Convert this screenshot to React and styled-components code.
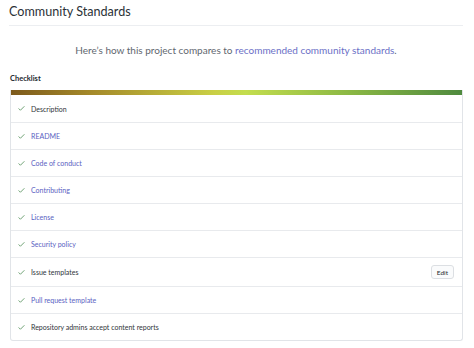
import React from 'react';
import styled, { createGlobalStyle } from 'styled-components';

const GlobalStyle = createGlobalStyle`
  body {
    margin: 0;
    background: #fff;
    font-family: Lato, "Open Sans", sans-serif;
    color: #24292f;
  }
`;

const Page = styled.div`
  width: 474px;
  height: 348px;
  padding: 0 11px 0 9px;
  box-sizing: border-box;
  overflow: hidden;
`;

const Header = styled.h2`
  margin: 0;
  padding: 4px 0 5px;
  font-size: 12.6px;
  font-weight: 400;
  line-height: 16px;
  color: #2b3137;
  border-bottom: 1px solid #eceef1;
`;

const Lead = styled.p`
  margin: 13px 0 0;
  text-align: center;
  font-size: 10px;
  font-weight: 400;
  line-height: 22px;
  color: #5f676f;

  a {
    color: #6b70c6;
    text-decoration: none;
  }
`;

const SectionTitle = styled.h3`
  margin: 12px 0 0;
  padding-left: 1px;
  font-size: 7.5px;
  font-weight: 700;
  line-height: 12px;
  color: #24292f;
`;

const Box = styled.div`
  margin-top: 5px;
  margin-left: 1px;
  border: 1px solid #e1e4e8;
  border-top: 0;
  border-radius: 0 0 3px 3px;
`;

const ProgressBar = styled.div`
  height: 5px;
  background: linear-gradient(
    to right,
    #7d5a1c 0%,
    #a58a2a 18%,
    #c9cf45 45%,
    #c3dd4e 52%,
    #8bb844 75%,
    #4f8a3f 100%
  );
`;

const Row = styled.div`
  display: flex;
  align-items: center;
  gap: 6px;
  height: ${p => (p.$tall ? 29 : 27)}px;
  padding: 0 7px;
  box-sizing: border-box;
  font-size: 7px;
  border-top: ${p => (p.$first ? 0 : '1px solid #e8eaed')};
`;

const Label = styled.span`
  flex: 1;
  color: ${p => (p.$link ? '#5a61c2' : '#2f3439')};
`;

const EditButton = styled.button`
  font-family: inherit;
  font-size: 6.5px;
  color: #24292f;
  background: #fafbfc;
  border: 1px solid #dcdfe3;
  border-radius: 3px;
  padding: 0 5px;
  height: 14px;
  margin-right: 1px;
`;

const Check = () => (
  <svg width="7" height="7" viewBox="0 0 16 16" fill="none">
    <path d="M2 8.5l3.5 3.5L14 3.5" stroke="#4a8a50" strokeWidth="1.8" strokeLinecap="round" strokeLinejoin="round" />
  </svg>
);

const items = [
  { label: 'Description' },
  { label: 'README', link: true },
  { label: 'Code of conduct', link: true },
  { label: 'Contributing', link: true },
  { label: 'License', link: true },
  { label: 'Security policy', link: true },
  { label: 'Issue templates', edit: true },
  { label: 'Pull request template', link: true },
  { label: 'Repository admins accept content reports' }
];

const App = () => (
  <Page>
    <GlobalStyle />
    <Header>Community Standards</Header>
    <Lead>
      Here’s how this project compares to <a href="#">recommended community standards</a>.
    </Lead>
    <SectionTitle>Checklist</SectionTitle>
    <Box>
      <ProgressBar />
      {items.map((item, i) => (
        <Row key={item.label} $first={i === 0} $tall={item.edit}>
          <Check />
          <Label $link={item.link}>{item.label}</Label>
          {item.edit && <EditButton>Edit</EditButton>}
        </Row>
      ))}
    </Box>
  </Page>
);

export default App;
